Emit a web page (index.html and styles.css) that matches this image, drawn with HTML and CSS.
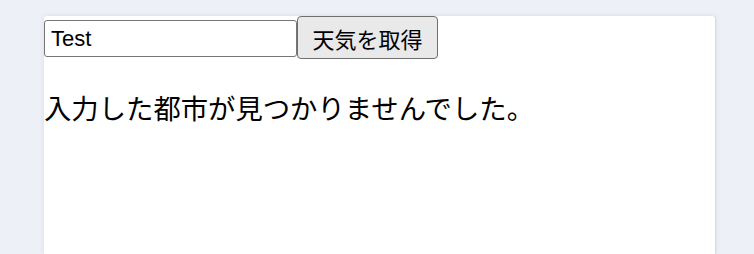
FILE: index.html
```html
<!DOCTYPE html>
<html lang="ja">
<head>
<meta charset="utf-8">
<link rel="stylesheet" href="styles.css">
</head>
<body>
<div class="card">
  <div class="form">
    <input class="city" type="text" value="Test"><button class="fetch">天気を取得</button>
  </div>
  <p class="message">入力した都市が見つかりませんでした。</p>
</div>
</body>
</html>
```
FILE: styles.css
```css
html, body {
  height: 100%;
}
body {
  margin: 0;
  background: #edf0f7;
  font-family: "Liberation Sans", "Noto Sans CJK JP", sans-serif;
  color: #000;
  padding: 16px 39px 0 44px;
  box-sizing: border-box;
  overflow: hidden;
  display: flex;
  flex-direction: column;
}
.card {
  flex: 1;
  background: #fff;
  border-radius: 3px 3px 0 0;
  box-shadow: 0 0 6px rgba(0, 0, 0, 0.08), 1px 0 1px rgba(0, 0, 0, 0.08);
}
.form {
  display: flex;
  align-items: center;
  height: 43px;
}
.city {
  box-sizing: border-box;
  width: 253px;
  height: 37px;
  margin: 2px 0 0 0;
  padding: 0 6px;
  border: 1px solid #767676;
  border-radius: 3px;
  font-family: "Liberation Sans", "Noto Sans CJK JP", sans-serif;
  font-size: 22px;
  color: #000;
  background: #fff;
}
.fetch {
  box-sizing: border-box;
  width: 141px;
  height: 43px;
  margin: 0;
  padding: 0;
  border: 1px solid #6f6f6f;
  border-radius: 4px;
  background: #e9e9e9;
  font-family: "Noto Sans CJK JP", sans-serif;
  font-size: 22px;
  color: #000;
}
.message {
  margin: 30px 0 0 0;
  font-family: "Noto Sans CJK JP", sans-serif;
  font-size: 27.35px;
  line-height: 36px;
}
```
